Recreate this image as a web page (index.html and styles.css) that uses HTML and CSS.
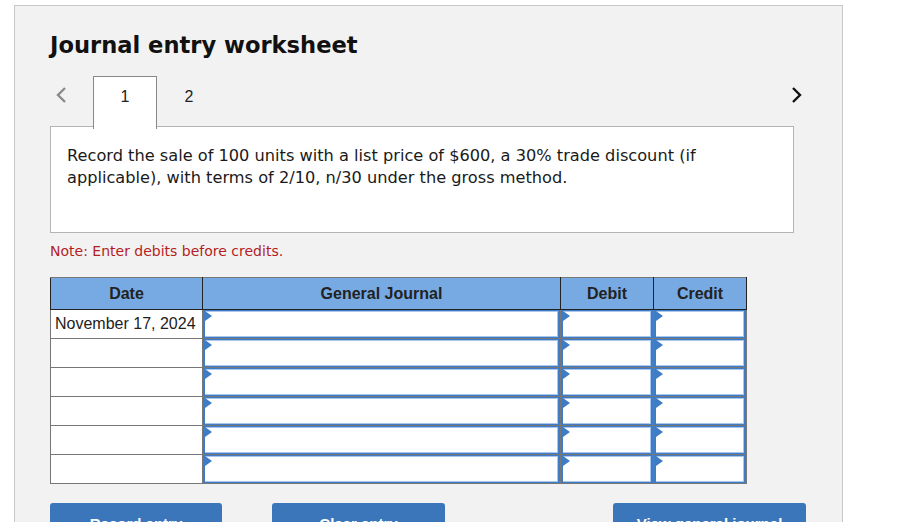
FILE: index.html
```html
<!DOCTYPE html>
<html lang="en">
<head>
  <meta charset="UTF-8" />
  <title>Journal entry worksheet</title>
  <link rel="stylesheet" href="styles.css">
</head>
<body>
  <div class="panel">
    <h1>Journal entry worksheet</h1>

    <div class="tabs">
      <span class="arrow prev">
        <svg width="14" height="18" viewBox="0 0 14 18"><path d="M11 2 L4 9 L11 16" fill="none" stroke="#8a8a8a" stroke-width="2.4"/></svg>
      </span>
      <div class="tab active">1</div>
      <div class="tab">2</div>
      <span class="arrow next">
        <svg width="14" height="18" viewBox="0 0 14 18"><path d="M3 2 L10 9 L3 16" fill="none" stroke="#111" stroke-width="2.4"/></svg>
      </span>
    </div>

    <div class="question">
      Record the sale of 100 units with a list price of $600, a 30% trade discount (if applicable), with terms of 2/10, n/30 under the gross method.
    </div>

    <p class="note">Note: Enter debits before credits.</p>

    <table class="journal">
      <thead>
        <tr>
          <th class="c-date">Date</th>
          <th class="c-acct">General Journal</th>
          <th class="c-num">Debit</th>
          <th class="c-num">Credit</th>
        </tr>
      </thead>
      <tbody id="rows"></tbody>
    </table>

    <div class="actions">
      <button class="btn record">Record entry</button>
      <button class="btn clear">Clear entry</button>
      <button class="btn view">View general journal</button>
    </div>
  </div>

  <script>
    const rows = document.getElementById("rows");
    const dates = ["November 17, 2024", "", "", "", "", ""];

    dates.forEach(date => {
      const tr = document.createElement("tr");
      const dateCell = document.createElement("td");
      dateCell.className = "date";
      dateCell.textContent = date;
      tr.appendChild(dateCell);
      for (let i = 0; i < 3; i++) {
        const td = document.createElement("td");
        td.className = "entry";
        td.innerHTML = '<div class="field"><span class="flag"></span></div>';
        tr.appendChild(td);
      }
      rows.appendChild(tr);
    });
  </script>
</body>
</html>
```

FILE: styles.css
```css
body {
  margin: 0;
  background: #fff;
  font-family: "DejaVu Sans", Verdana, sans-serif;
  color: #222;
}

.panel {
  margin: 5px 0 0 14px;
  width: 792px;
  height: 560px;
  padding: 0 0 0 35px;
  background: #f2f2f2;
  border: 1px solid #c8c8c8;
}

h1 {
  margin: 0;
  padding-top: 26px;
  font-size: 22.6px;
  font-weight: bold;
  color: #111;
  line-height: 26px;
}

.tabs {
  display: flex;
  align-items: stretch;
  width: 760px;
  height: 51px;
  margin-top: 18px;
}

.arrow {
  display: flex;
  align-items: center;
  padding-bottom: 13px;
}

.arrow.prev {
  width: 43px;
  padding-left: 4px;
  box-sizing: border-box;
}

.arrow.next {
  margin-left: auto;
  width: 20px;
}

.tab {
  width: 62px;
  text-align: center;
  padding-top: 11px;
  font-family: "Liberation Sans", Arial, sans-serif;
  font-size: 16px;
  color: #222;
  border: 1px solid transparent;
  border-bottom: none;
}

.tab.active {
  background: #fff;
  border-color: #888;
  position: relative;
  z-index: 1;
  height: 41px;
}

.question {
  width: 710px;
  height: 87px;
  margin-top: -1px;
  padding: 18px 16px 0;
  background: #fff;
  border: 1px solid #b4b4b4;
  font-size: 16.2px;
  line-height: 22px;
  color: #1a1a1a;
}

.note {
  margin: 10px 0 0;
  font-size: 14px;
  line-height: 17px;
  color: #b41e1e;
}

.journal {
  margin-top: 17px;
  border-collapse: collapse;
  font-family: "Liberation Sans", Arial, sans-serif;
  font-size: 16px;
  border: 1px solid #777;
}

.journal th {
  height: 31px;
  padding: 0;
  background: #77aae2;
  color: #222;
  font-weight: bold;
  border: 1px solid #222;
  border-top-color: #777;
}

.c-date { width: 151px; }
.c-acct { width: 357px; }
.c-num { width: 92px; }

.journal td {
  height: 28px;
  padding: 0;
  border: 1px solid #777;
}

.date {
  background: #fff;
  padding-left: 4px !important;
  white-space: nowrap;
  color: #222;
}

.entry {
  background: #3f7cc6;
}

.field {
  position: relative;
  height: 24px;
  margin: 1px 2px 1px 2px;
  background: #fff;
  border: 1px solid #a9c6ec;
  border-left-width: 0;
}

.flag {
  position: absolute;
  left: 0;
  top: -1px;
  width: 0;
  height: 0;
  border-top: 5px solid transparent;
  border-bottom: 5px solid transparent;
  border-left: 7px solid #3f7cc6;
}

.actions {
  display: flex;
  width: 756px;
  margin-top: 19px;
}

.btn {
  height: 40px;
  border: none;
  border-radius: 3px;
  background: #3a76b9;
  color: #fff;
  font-family: "Liberation Sans", Arial, sans-serif;
  font-size: 15px;
  font-weight: bold;
  padding-top: 2px;
}

.record { width: 172px; }
.clear { width: 173px; margin-left: 50px; }
.view { width: 193px; margin-left: auto; }
```
